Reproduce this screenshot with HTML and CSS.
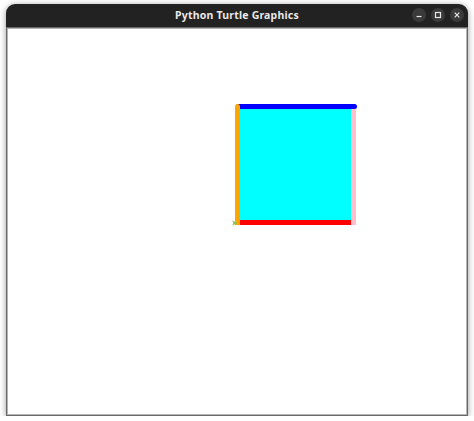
FILE: index.html
```html
<!DOCTYPE html>
<html lang="en">
<head>
  <meta charset="UTF-8">
  <title>Python Turtle Graphics</title>
  <link rel="stylesheet" href="styles.css">
</head>
<body>
  <div class="window">
    <div class="titlebar">
      <span class="title">Python Turtle Graphics</span>
      <div class="controls">
        <span class="ctl">
          <svg width="8" height="8" viewBox="0 0 8 8"><line x1="1.5" y1="5.5" x2="6.5" y2="5.5" stroke="#e6e6e6" stroke-width="1.2"/></svg>
        </span>
        <span class="ctl">
          <svg width="8" height="8" viewBox="0 0 8 8"><rect x="1.5" y="1.5" width="5" height="5" fill="none" stroke="#e6e6e6" stroke-width="1.2"/></svg>
        </span>
        <span class="ctl">
          <svg width="8" height="8" viewBox="0 0 8 8"><path d="M1.7 1.7 L6.3 6.3 M6.3 1.7 L1.7 6.3" stroke="#e6e6e6" stroke-width="1.2"/></svg>
        </span>
      </div>
    </div>
    <div class="canvas">
      <svg width="458" height="385" viewBox="8 28 458 385">
        <rect x="240" y="108" width="111" height="111" fill="#00ffff"/>
        <rect x="240" y="219" width="111" height="5" fill="#ff0000"/>
        <rect x="351" y="108" width="5" height="116" fill="#ffc0cb"/>
        <rect x="236" y="103" width="121" height="5" rx="2.5" fill="#0000ff"/>
        <rect x="235" y="103" width="5" height="121" rx="2.5" fill="#ffa500"/>
        <rect x="235" y="110" width="5" height="114" fill="#ffa500"/>
        <path d="M232 219.5 L238 222 L232 224.5 L233.5 222 Z" fill="#8fbf5a"/>
      </svg>
    </div>
  </div>
</body>
</html>
```

FILE: styles.css
```css
body {
  margin: 0;
  padding: 4px 6px 0 6px;
  background: #ffffff;
  font-family: "Noto Sans", "DejaVu Sans", sans-serif;
}
.window {
  width: 462px;
  box-shadow: 0 1px 6px rgba(0, 0, 0, 0.4);
  border-radius: 9px 9px 0 0;
}
.titlebar {
  height: 23px;
  background: #222222;
  border-radius: 9px 9px 0 0;
  display: flex;
  align-items: center;
  justify-content: center;
  position: relative;
}
.title {
  color: #e8e8e8;
  font-size: 10.5px;
  font-weight: bold;
  letter-spacing: 0.2px;
  margin-top: -1px;
}
.controls {
  position: absolute;
  right: 4px;
  top: 4px;
  display: flex;
  gap: 5px;
}
.ctl {
  width: 14px;
  height: 14px;
  border-radius: 50%;
  background: #3a3a3a;
  display: flex;
  align-items: center;
  justify-content: center;
}
.canvas {
  border: 1px solid #686868;
  box-shadow: inset 0 0 0 1px #b4b4b4;
  padding: 1px;
  background: #ffffff;
  height: 385px;
}
.canvas svg {
  display: block;
}
```
